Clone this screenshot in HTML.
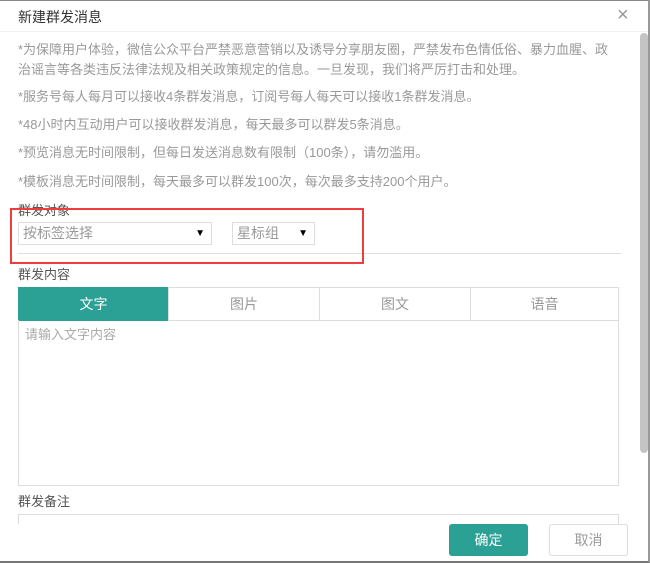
<!DOCTYPE html>
<html><head><meta charset="utf-8"><style>
*{box-sizing:border-box;margin:0;padding:0}
body{width:650px;height:563px;overflow:hidden;background:#fff;font-family:"Liberation Sans","Noto Sans CJK SC",sans-serif;position:relative;color:#999;font-size:13px}
.abs{position:absolute}
.frame{left:0;top:0;width:650px;height:563px;border-top:1px solid #888;border-bottom:2px solid #777;border-right:2px solid #999}
.p{left:18px;font-size:13px;color:#999;white-space:nowrap;line-height:19px}
.lbl{left:18px;font-size:13px;color:#555}
.sel{border:1px solid #ddd;height:23px;top:222px;color:#999;font-size:14px;line-height:21px;padding-left:4px}
.sel i{position:absolute;right:6px;top:0;font-style:normal;color:#000;font-size:10px}
.tab{top:287px;height:34px;border:1px solid #ddd;text-align:center;line-height:32px;font-size:14px;color:#999}
</style></head><body>
<div class="abs frame"></div>
<div class="abs" style="left:18px;top:7px;font-size:14px;color:#333">新建群发消息</div>
<div class="abs" style="left:617px;top:4px;font-size:20px;color:#999">×</div>
<div class="abs" style="left:0;top:31px;width:648px;height:1px;background:#f2f2f2"></div>
<div class="abs" style="left:640px;top:33px;width:8px;height:420px;background:#c4c4c4;border-radius:4px"></div>
<div class="abs p" style="top:40px">*为保障用户体验，微信公众平台严禁恶意营销以及诱导分享朋友圈，严禁发布色情低俗、暴力血腥、政</div>
<div class="abs p" style="top:60px">治谣言等各类违反法律法规及相关政策规定的信息。一旦发现，我们将严厉打击和处理。</div>
<div class="abs p" style="top:87px">*服务号每人每月可以接收4条群发消息，订阅号每人每天可以接收1条群发消息。</div>
<div class="abs p" style="top:115px">*48小时内互动用户可以接收群发消息，每天最多可以群发5条消息。</div>
<div class="abs p" style="top:143px">*预览消息无时间限制，但每日发送消息数有限制（100条），请勿滥用。</div>
<div class="abs p" style="top:172px">*模板消息无时间限制，每天最多可以群发100次，每次最多支持200个用户。</div>
<div class="abs lbl" style="top:200px">群发对象</div>
<div class="abs sel" style="left:18px;width:194px">按标签选择<i>▼</i></div>
<div class="abs sel" style="left:232px;width:83px">星标组<i>▼</i></div>
<div class="abs" style="left:18px;top:253px;width:603px;height:1px;background:#ddd"></div>
<div class="abs" style="left:10px;top:208px;width:354px;height:56px;border:2px solid #f03c3c"></div>
<div class="abs lbl" style="top:264px">群发内容</div>
<div class="abs tab" style="left:18px;width:151px;background:#2ba095;border-color:#2ba095;color:#fff">文字</div>
<div class="abs tab" style="left:168px;width:152px">图片</div>
<div class="abs tab" style="left:319px;width:152px">图文</div>
<div class="abs tab" style="left:470px;width:149px">语音</div>
<div class="abs" style="left:18px;top:320px;width:601px;height:166px;border:1px solid #ddd;border-top:none;padding:4px 6px;font-size:13px;color:#aaa">请输入文字内容</div>
<div class="abs lbl" style="top:491px">群发备注</div>
<div class="abs" style="left:18px;top:514px;width:601px;height:10px;border:1px solid #ddd;border-bottom:none"></div>
<div class="abs" style="left:449px;top:524px;width:79px;height:32px;background:#2ba095;border-radius:3px;color:#fff;text-align:center;line-height:32px;font-size:14px">确定</div>
<div class="abs" style="left:549px;top:524px;width:79px;height:32px;border:1px solid #ddd;border-radius:3px;color:#999;text-align:center;line-height:30px;font-size:14px">取消</div>
</body></html>
